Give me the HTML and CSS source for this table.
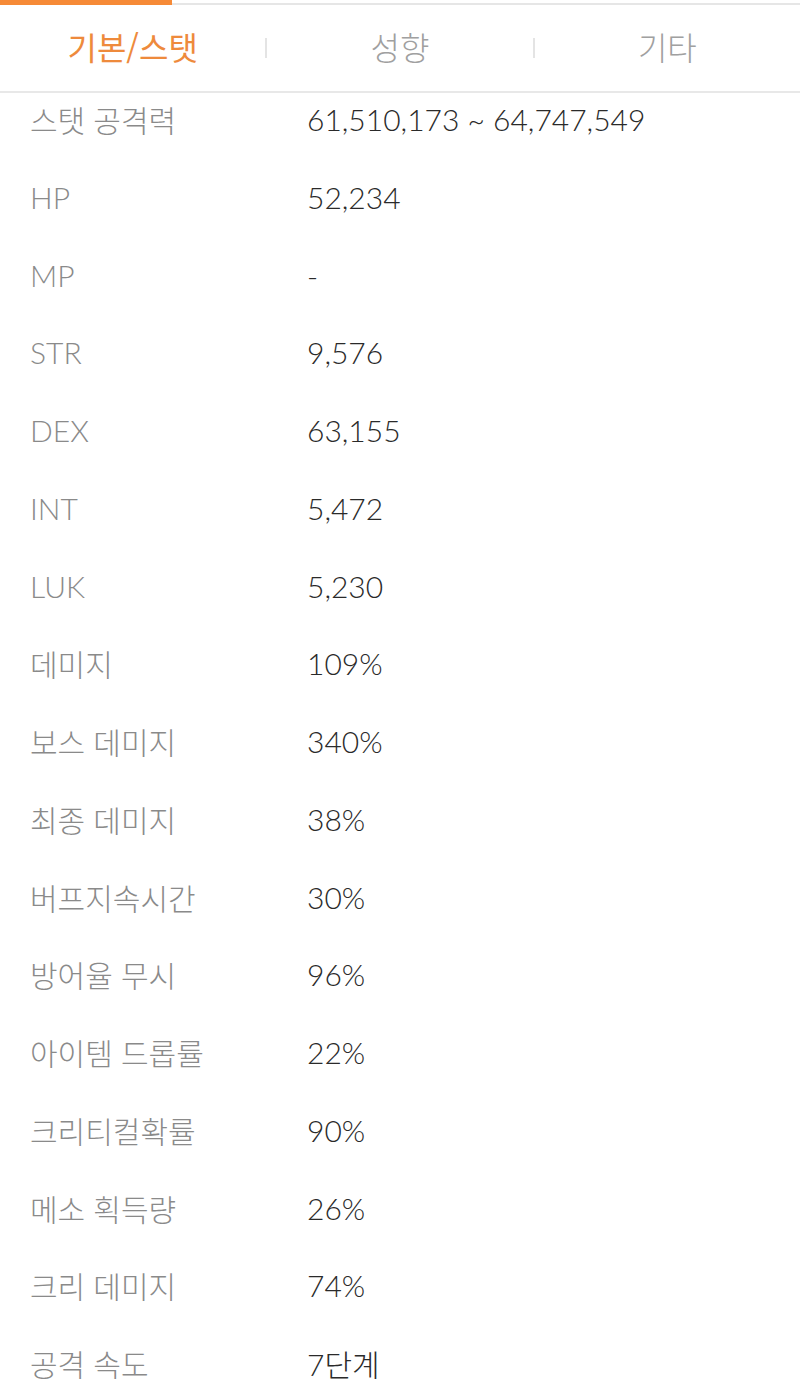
FILE: index.html
```html
<!DOCTYPE html>
<html lang="ko">
<head>
<meta charset="utf-8">
<link rel="stylesheet" href="styles.css">
</head>
<body>
<div class="progress"><div class="progress-fill"></div></div>
<nav class="tabs">
  <div class="tab active">기본/스탯</div>
  <span class="sep"></span>
  <div class="tab">성향</div>
  <span class="sep"></span>
  <div class="tab">기타</div>
</nav>
<div class="stats">
  <div class="row"><span class="label">스탯 공격력</span><span class="value">61,510,173 ~ 64,747,549</span></div>
  <div class="row"><span class="label">HP</span><span class="value">52,234</span></div>
  <div class="row"><span class="label">MP</span><span class="value">-</span></div>
  <div class="row"><span class="label">STR</span><span class="value">9,576</span></div>
  <div class="row"><span class="label">DEX</span><span class="value">63,155</span></div>
  <div class="row"><span class="label">INT</span><span class="value">5,472</span></div>
  <div class="row"><span class="label">LUK</span><span class="value">5,230</span></div>
  <div class="row"><span class="label">데미지</span><span class="value">109%</span></div>
  <div class="row"><span class="label">보스 데미지</span><span class="value">340%</span></div>
  <div class="row"><span class="label">최종 데미지</span><span class="value">38%</span></div>
  <div class="row"><span class="label">버프지속시간</span><span class="value">30%</span></div>
  <div class="row"><span class="label">방어율 무시</span><span class="value">96%</span></div>
  <div class="row"><span class="label">아이템 드롭률</span><span class="value">22%</span></div>
  <div class="row"><span class="label">크리티컬확률</span><span class="value">90%</span></div>
  <div class="row"><span class="label">메소 획득량</span><span class="value">26%</span></div>
  <div class="row"><span class="label">크리 데미지</span><span class="value">74%</span></div>
  <div class="row"><span class="label">공격 속도</span><span class="value">7단계</span></div>
</div>
</body>
</html>
```
FILE: styles.css
```css
html, body {
  margin: 0;
  padding: 0;
  background: #ffffff;
}
body {
  font-family: "Lato", "Noto Sans CJK KR", sans-serif;
  overflow: hidden;
  height: 1382px;
}
.progress {
  height: 5px;
  position: relative;
  display: flex;
  align-items: flex-end;
}
.progress::before {
  content: "";
  position: absolute;
  left: 0;
  right: 0;
  bottom: 0;
  height: 2px;
  background: #e6e6e6;
}
.progress-fill {
  position: relative;
  width: 172px;
  height: 5px;
  background: #f68a37;
}
.tabs {
  display: flex;
  align-items: center;
  height: 82px;
  padding-bottom: 4px;
  border-bottom: 2px solid #e8e8e8;
}
.tab {
  flex: 1;
  text-align: center;
  font-family: "Noto Sans CJK KR", sans-serif;
  font-size: 32px;
  font-weight: 300;
  color: #a0a0a0;
}
.tab.active {
  color: #ee8a3c;
  font-weight: 400;
}
.sep {
  width: 2px;
  height: 20px;
  margin-top: 4px;
  background: #e4e4e4;
}
.stats {
  display: flex;
  flex-direction: column;
  padding-top: 0;
}
.row {
  display: flex;
  height: 52px;
  align-items: center;
  margin-bottom: 25.75px;
  font-size: 30px;
}
.label {
  width: 277px;
  padding-left: 30px;
  color: #8a8a8a;
  font-family: "Lato", "Noto Sans CJK KR", sans-serif;
  font-weight: 300;
}
.value {
  color: #2a2a2a;
  font-family: "Lato", "Noto Sans CJK KR", sans-serif;
  font-weight: 300;
}
```
